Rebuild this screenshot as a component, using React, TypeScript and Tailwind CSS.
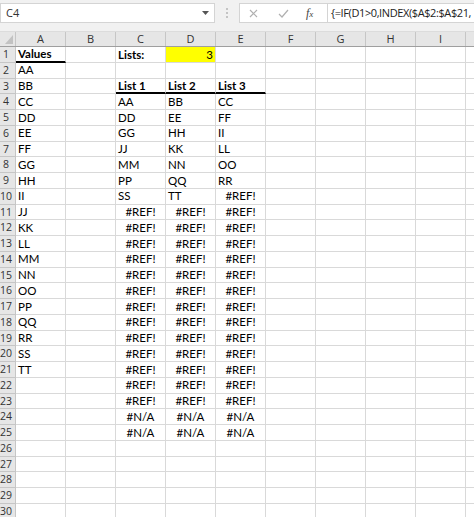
import React from "react";

type Cell = { t: string; b?: boolean; al?: "l" | "c" | "r"; bg?: string; bb?: boolean };

const vals = ["AA","BB","CC","DD","EE","FF","GG","HH","II","JJ","KK","LL","MM","NN","OO","PP","QQ","RR","SS","TT"];

function buildRows(): Record<number, (Cell | null)[]> {
  const r: Record<number, (Cell | null)[]> = {};
  for (let i = 1; i <= 30; i++) r[i] = [null, null, null, null, null];
  r[1][0] = { t: "Values", b: true, bb: true };
  vals.forEach((v, i) => (r[i + 2][0] = { t: v }));
  r[1][2] = { t: "Lists:", b: true };
  r[1][3] = { t: "3", al: "r", bg: "yellow" };
  r[3][2] = { t: "List 1", b: true, bb: true };
  r[3][3] = { t: "List 2", b: true, bb: true };
  r[3][4] = { t: "List 3", b: true, bb: true };
  const lists = [
    ["AA","BB","CC"],["DD","EE","FF"],["GG","HH","II"],["JJ","KK","LL"],["MM","NN","OO"],["PP","QQ","RR"],["SS","TT",""],
  ];
  lists.forEach((l, i) => {
    l.forEach((v, j) => {
      if (v) r[i + 4][j + 2] = { t: v };
    });
  });
  r[10][4] = { t: "#REF!", al: "c" };
  for (let i = 11; i <= 23; i++) for (let j = 2; j <= 4; j++) r[i][j] = { t: "#REF!", al: "c" };
  for (let i = 24; i <= 25; i++) for (let j = 2; j <= 4; j++) r[i][j] = { t: "#N/A", al: "c" };
  return r;
}

const rows = buildRows();
const cols = ["A","B","C","D","E","F","G","H","I","J"];

function CellView({ c }: { c: Cell | null }) {
  const base = "w-[50px] h-full shrink-0 border-r border-[#d9d9d9] flex items-center px-[2px] overflow-visible whitespace-nowrap";
  if (!c) return <div className={base + " border-b"} />;
  const al = c.al === "c" ? " justify-center" : c.al === "r" ? " justify-end" : " justify-start";
  const bg = c.bg === "yellow" ? " bg-[#ffff00]" : "";
  const bb = c.bb ? " border-b-2 border-b-black" : " border-b";
  return (
    <div className={base + al + bg + bb}>
      <span className={c.b ? "font-bold" : ""}>{c.t}</span>
    </div>
  );
}

export default function App() {
  return (
    <div className="w-[474px] h-[517px] overflow-hidden bg-white text-[#000]" style={{ fontFamily: "Lato, 'Open Sans', sans-serif" }}>
      {/* Formula bar */}
      <div className="h-[32px] bg-[#f1f1f1] flex items-start pt-[3px] border-b border-[#dcdcdc]">
        <div className="w-[215px] shrink-0 h-[20px] bg-white border border-[#d4d4d4] flex items-center justify-between pl-[5px] pr-[5px]">
          <span className="text-[11px] text-[#333]" style={{ fontFamily: "'Open Sans', sans-serif" }}>C4</span>
          <svg width="7" height="4" viewBox="0 0 7 4"><path d="M0 0h7L3.5 4z" fill="#555" /></svg>
        </div>
        <div className="w-[24px] shrink-0 h-[20px] flex flex-col items-center justify-center gap-[2px]">
          <span className="w-[2px] h-[2px] bg-[#b5b5b5] rounded-full" />
          <span className="w-[2px] h-[2px] bg-[#b5b5b5] rounded-full" />
          <span className="w-[2px] h-[2px] bg-[#b5b5b5] rounded-full" />
        </div>
        <div className="w-[260px] shrink-0 h-[20px] bg-white border border-[#d4d4d4] flex items-center">
          <div className="w-[88px] shrink-0 h-full flex items-center border-r border-[#d4d4d4] pl-[9px]">
            <svg width="9" height="9" viewBox="0 0 9 9"><path d="M1 1l7 7M8 1L1 8" stroke="#b0b0b0" strokeWidth="1.2" /></svg>
            <svg className="ml-[20px]" width="11" height="9" viewBox="0 0 11 9"><path d="M1 5l3 3 6-7" stroke="#b0b0b0" strokeWidth="1.2" fill="none" /></svg>
            <span className="ml-[17px] text-[12px] italic text-[#444]" style={{ fontFamily: "'Liberation Serif', serif" }}>f<span className="text-[9px]">x</span></span>
          </div>
          <span className="pl-[3px] text-[11px] tracking-[-0.4px] text-[#222] whitespace-nowrap" style={{ fontFamily: "'Open Sans', sans-serif" }}>{"{=IF(D1>0,INDEX($A$2:$A$21,"}</span>
        </div>
      </div>
      {/* Column header */}
      <div className="h-[15px] flex bg-[#e6e6e6] border-b border-[#9f9f9f] text-[11px] text-[#333]" style={{ fontFamily: "'Open Sans', sans-serif" }}>
        <div className="w-[16px] shrink-0 h-full border-r border-[#c6c6c6] flex items-end justify-end pr-[2px] pb-[2px]">
          <svg width="8" height="9" viewBox="0 0 8 9"><path d="M8 0v9H0z" fill="#c2c2c2" /></svg>
        </div>
        {cols.map((c) => (
          <div key={c} className="w-[50px] shrink-0 h-full border-r border-[#c6c6c6] flex items-center justify-center">{c}</div>
        ))}
      </div>
      {/* Body */}
      {Array.from({ length: 30 }, (_, i) => i + 1).map((n) => (
        <div key={n} className="h-[15.75px] flex text-[11.5px] leading-none">
          <div className="w-[16px] shrink-0 h-full bg-[#e6e6e6] border-r border-b border-[#c6c6c6] flex items-center justify-center pr-[3px] text-[#333] overflow-visible" style={{ fontFamily: "'Open Sans', sans-serif" }}>
            <span className="text-[10.5px]">{n}</span>
          </div>
          {rows[n].map((c, j) => (
            <CellView key={j} c={c} />
          ))}
          {Array.from({ length: 5 }).map((_, j) => (
            <CellView key={"e" + j} c={null} />
          ))}
        </div>
      ))}
    </div>
  );
}
